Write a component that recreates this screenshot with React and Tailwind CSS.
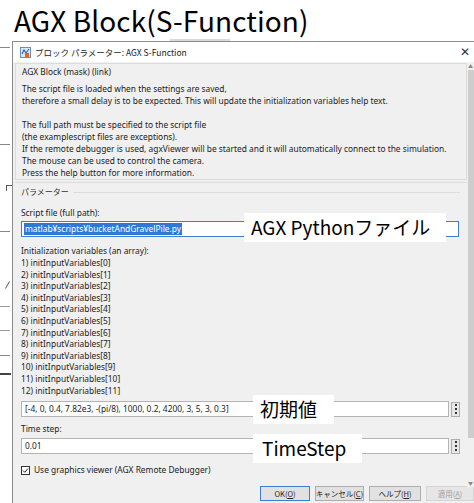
import React from 'react'

const ui = { fontFamily: '"Noto Sans", "Noto Sans CJK JP", sans-serif' }
const jp = { fontFamily: '"Noto Sans CJK JP", "Noto Sans", sans-serif' }

const helpLines = [
  'The script file is loaded when the settings are saved,',
  'therefore a small delay is to be expected. This will update the initialization variables help text.',
  '',
  'The full path must be specified to the script file',
  '(the examplescript files are exceptions).',
  'If the remote debugger is used, agxViewer will be started and it will automatically connect to the simulation.',
  'The mouse can be used to control the camera.',
  'Press the help button for more information.',
]

const vars = Array.from({ length: 12 }, (_, i) => `${i + 1}) initInputVariables[${i}]`)

function DotsButton() {
  return (
    <div className="w-[9px] h-[15px] ml-[2px] border border-[#adadad] bg-[#e8e8e8] flex flex-col items-center justify-center gap-[2px]">
      <span className="w-[2px] h-[2px] bg-[#333]" />
      <span className="w-[2px] h-[2px] bg-[#333]" />
      <span className="w-[2px] h-[2px] bg-[#333]" />
    </div>
  )
}

function Btn({ label, k, primary, disabled }) {
  return (
    <div
      className={
        'h-[15px] flex items-center justify-center whitespace-nowrap text-[7.5px] border ' +
        (primary ? 'border-[#3c7fd1] bg-[#e1e1e1] text-[#222] ' : disabled ? 'border-[#d4d4d4] bg-[#e6e6e6] text-[#a0a0a0] ' : 'border-[#adadad] bg-[#e1e1e1] text-[#222] ')
      }
      style={jp}
    >
      {label}(<span className="underline">{k}</span>)
    </div>
  )
}

export default function App() {
  return (
    <div className="relative w-[474px] h-[503px] bg-white overflow-hidden text-[#1b1b1b]">
      {/* slide title */}
      <div className="h-[41px] pl-[14px] pt-[2px] text-[28px] leading-[36px] text-black tracking-[0.1px]" style={jp}>
        AGX Block(S-Function)
      </div>

      {/* simulink lines peeking out behind the dialog */}
      <div className="absolute left-0 top-[47px] w-[10px] h-px bg-[#888]" />
      <div className="absolute left-0 top-[144px] w-[10px] h-px bg-[#888]" />
      <div className="absolute left-[6px] top-[185px] w-[6px] h-px bg-[#555]" />
      <div className="absolute left-[6px] top-[185px] w-px h-[6px] bg-[#555]" />
      <div className="absolute left-0 top-[231px] w-[10px] h-px bg-[#888]" />
      <div className="absolute left-[7px] top-[281px] w-px h-[8px] bg-[#666] rotate-[30deg]" />
      <div className="absolute left-0 top-[306px] w-[10px] h-px bg-[#999]" />
      <div className="absolute left-0 top-[330px] w-[10px] h-px bg-[#999]" />
      <div className="absolute left-0 top-[355px] w-[10px] h-px bg-[#888]" />
      <div className="absolute left-0 top-[373px] w-[11px] h-[2px] bg-[#444]" />
      <div className="absolute left-[170px] top-[39px] w-[60px] h-[2px] bg-[#d8d8d8]" />

      {/* dialog */}
      <div className="ml-[12px] border-l border-t border-[#8c8c8c] bg-[#f0f0f0] w-[462px] h-[462px] flex flex-col" style={ui}>
        <div className="h-[20px] bg-white flex items-center pl-[7px] pr-[4px]">
          <svg width="11" height="11" viewBox="0 0 11 11" className="mr-[4px]">
            <rect x="0.5" y="0.5" width="10" height="10" fill="#dfe9f5" stroke="#6b8fb8" />
            <path d="M2 7 L4 3 L6 6 L9 2" stroke="#2a68b0" strokeWidth="1.2" fill="none" />
            <rect x="5" y="6" width="4" height="4" fill="#d9692a" />
          </svg>
          <span className="text-[8.5px] text-[#222]" style={jp}>ブロック パラメーター: AGX S-Function</span>
          <span className="ml-auto text-[12px] leading-none text-[#333] font-light">✕</span>
        </div>

        <div className="flex flex-1">
          <div className="flex-1 flex flex-col pl-[2px]">
            {/* mask description group */}
            <div className="mt-[1px] border border-[#dcdcdc] h-[117px] pl-[6px] pt-[2px]">
              <div className="text-[8.4px] leading-[12px]">AGX Block (mask) (link)</div>
              <div className="mt-[5px] text-[8.4px] leading-[12px]">
                {helpLines.map((l, i) => (
                  <div key={i} className="h-[12px] whitespace-nowrap">{l}</div>
                ))}
              </div>
            </div>
            <div className="mt-[2px] h-px bg-[#dcdcdc]" />

            {/* parameters group */}
            <div className="mt-[3px] pl-[6px] pr-[7px] flex flex-col">
              <div className="flex items-center">
                <span className="text-[8px] leading-[12px] text-[#333]" style={jp}>パラメーター</span>
                <span className="flex-1 h-px bg-[#dcdcdc] ml-[4px]" />
              </div>
              <div className="mt-[9px] text-[8.4px] leading-[12px]">Script file (full path):</div>
              <div className="relative mt-[2px] mr-[1px] h-[16px] bg-white border border-[#3c7fd1] flex items-center pl-[2px]">
                <span className="bg-[#3078d6] text-white text-[8.4px] leading-[12px] px-[1px]">matlab¥scripts¥bucketAndGravelPile.py</span>
                <div className="absolute left-[222px] top-[-9px] w-[202px] h-[29px] bg-white flex items-center pl-[7px] text-[19px] text-black" style={jp}>
                  AGX Pythonファイル
                </div>
              </div>

              <div className="mt-[8px] text-[8.4px] leading-[12px]">Initialization variables (an array):</div>
              <div className="text-[8.4px] leading-[11.6px]">
                {vars.map(v => (
                  <div key={v}>{v}</div>
                ))}
              </div>

              <div className="mt-[5px] flex items-center">
                <div className="relative flex-1 h-[16px] bg-white border border-[#b4b4b4] flex items-center pl-[3px] text-[8.4px]">
                  [-4, 0, 0.4, 7.82e3, -(pi/8), 1000, 0.2, 4200, 3, 5, 3, 0.3]
                  <div className="absolute left-[231px] top-[-7px] w-[81px] h-[29px] bg-white flex items-center pl-[7px] text-[19px] text-black" style={jp}>
                    初期値
                  </div>
                </div>
                <DotsButton />
              </div>

              <div className="mt-[6px] text-[8.4px] leading-[12px]">Time step:</div>
              <div className="mt-[3px] flex items-center">
                <div className="relative flex-1 h-[16px] bg-white border border-[#b4b4b4] flex items-center pl-[3px] text-[8.4px]">
                  0.01
                  <div className="absolute left-[231px] top-[-5px] w-[109px] h-[29px] bg-white flex items-center pl-[9px] text-[19px] text-black" style={jp}>
                    TimeStep
                  </div>
                </div>
                <DotsButton />
              </div>

              <div className="mt-[10px] flex items-center">
                <div className="w-[9px] h-[9px] border border-[#333] bg-white flex items-center justify-center">
                  <svg width="7" height="7" viewBox="0 0 7 7">
                    <path d="M1 3.5 L2.8 5.3 L6 1.5" stroke="#222" strokeWidth="1" fill="none" />
                  </svg>
                </div>
                <span className="ml-[4px] text-[8.4px] leading-[12px]">Use graphics viewer (AGX Remote Debugger)</span>
              </div>

              <div className="mt-[10px] flex justify-end gap-[5px] mr-[-14px]">
                <div className="w-[50px]"><Btn label="OK" k="O" primary /></div>
                <div className="w-[49px]"><Btn label="キャンセル" k="C" /></div>
                <div className="w-[52px]"><Btn label="ヘルプ" k="H" /></div>
                <div className="w-[48px]"><Btn label="適用" k="A" disabled /></div>
              </div>
            </div>
          </div>

          {/* scrollbar */}
          <div className="w-[7px] h-[425px] bg-[#f0f0f0] flex flex-col items-center">
            <span className="text-[5px] leading-[6px] text-[#888] mt-[1px]">▲</span>
            <div className="w-[6px] h-[368px] bg-[#cdcdcd] mt-[1px]" />
            <div className="flex-1" />
            <span className="text-[5px] leading-[6px] text-[#888] mb-[1px]">▼</span>
          </div>
        </div>
      </div>
    </div>
  )
}
